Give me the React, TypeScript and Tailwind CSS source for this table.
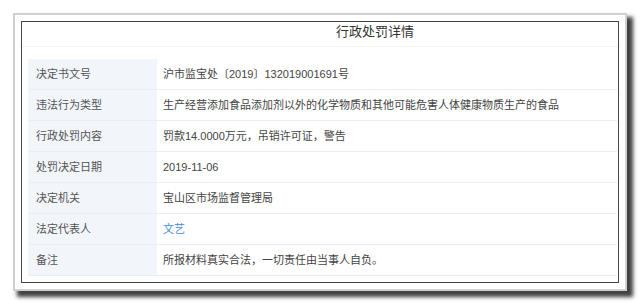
const rows: { label: string; value: string; link?: boolean }[] = [
  { label: '决定书文号', value: '沪市监宝处〔2019〕132019001691号' },
  { label: '违法行为类型', value: '生产经营添加食品添加剂以外的化学物质和其他可能危害人体健康物质生产的食品' },
  { label: '行政处罚内容', value: '罚款14.0000万元，吊销许可证，警告' },
  { label: '处罚决定日期', value: '2019-11-06' },
  { label: '决定机关', value: '宝山区市场监督管理局' },
  { label: '法定代表人', value: '文艺', link: true },
  { label: '备注', value: '所报材料真实合法，一切责任由当事人自负。' },
]

export default function App() {
  return (
    <div
      className="w-[640px] h-[304px] bg-white p-[13px] overflow-hidden"
      style={{ fontFamily: '"Liberation Sans", "Noto Sans CJK SC", sans-serif' }}
    >
      <div className="w-[614px] h-[278px] border-2 border-[#cfcfcf] bg-white px-[6px] py-[6px] shadow-[5px_5px_4px_1px_rgba(30,30,30,0.85)]">
        <div className="h-full border border-[#454545] bg-white flex flex-col">
          <div className="h-[25px] border-b border-[#f1f4f8] pl-[314px] pt-[1px] text-[13px] leading-[18px] text-[#333]">
            行政处罚详情
          </div>
          <div className="mt-[12px] ml-[6px] mr-[1px]">
            {rows.map((r) => (
              <div key={r.label} className="flex h-[31px] border-b border-[#e8eef5] text-[11px]">
                <div className="w-[129px] shrink-0 bg-[#f2f6fb] pl-[8px] flex items-center text-[#555]">
                  {r.label}
                </div>
                <div
                  className={
                    r.link
                      ? 'flex-1 pl-[6px] flex items-center text-[#3f8be6]'
                      : 'flex-1 pl-[6px] flex items-center text-[#444]'
                  }
                >
                  {r.value}
                </div>
              </div>
            ))}
          </div>
        </div>
      </div>
    </div>
  )
}
